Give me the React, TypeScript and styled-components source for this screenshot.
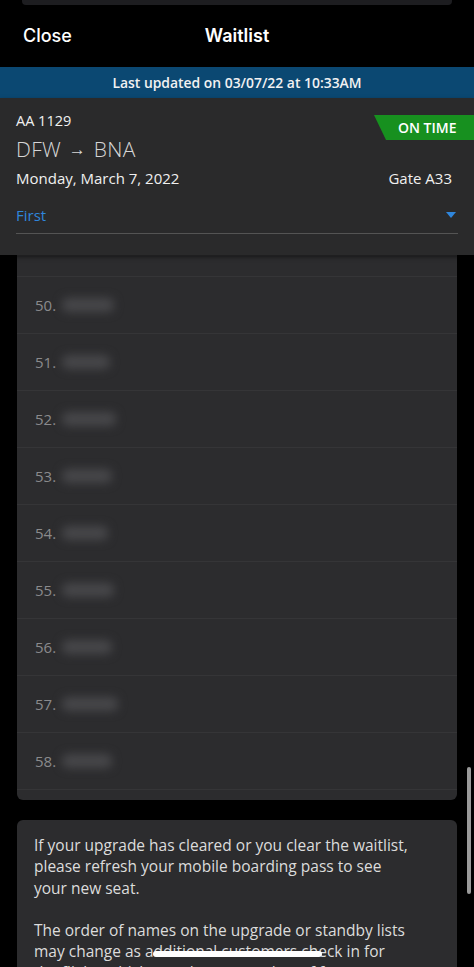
import React from "react";
import styled, { createGlobalStyle } from "styled-components";

const GlobalStyle = createGlobalStyle`
    * {
        box-sizing: border-box;
    }
    body {
        margin: 0;
        background: #000;
        font-family: "Open Sans", "Liberation Sans", sans-serif;
    }
`;

const waitlist = [
    { pos: 50, name: 52 },
    { pos: 51, name: 48 },
    { pos: 52, name: 54 },
    { pos: 53, name: 50 },
    { pos: 54, name: 46 },
    { pos: 55, name: 52 },
    { pos: 56, name: 50 },
    { pos: 57, name: 56 },
    { pos: 58, name: 50 },
];

const App: React.FC = () => {
    return (
        <>
            <GlobalStyle />
            <Screen>
                <TopStrip />
                <NavBar>
                    <NavButton>Close</NavButton>
                    <NavTitle>Waitlist</NavTitle>
                    <span />
                </NavBar>
                <UpdatedBar>Last updated on 03/07/22 at 10:33AM</UpdatedBar>
                <FlightCard>
                    <StatusBadge>ON TIME</StatusBadge>
                    <FlightNumber>AA 1129</FlightNumber>
                    <Route>
                        DFW <Arrow>→</Arrow> BNA
                    </Route>
                    <InfoRow>
                        <span>Monday, March 7, 2022</span>
                        <span>Gate A33</span>
                    </InfoRow>
                    <CabinSelect>
                        <span>First</span>
                        <svg width="10" height="6" viewBox="0 0 10 6">
                            <path d="M0 0 L10 0 L5 6 Z" fill="#2f86dc" />
                        </svg>
                    </CabinSelect>
                </FlightCard>
                <ListCard>
                    <PartialRow />
                    {waitlist.map((item) => (
                        <ListRow key={item.pos}>
                            <Position>{item.pos}.</Position>
                            <BlurredName $width={item.name} />
                        </ListRow>
                    ))}
                </ListCard>
                <NoteCard>
                    <p>
                        If your upgrade has cleared or you clear the waitlist,
                        please refresh your mobile boarding pass to see your
                        new seat.
                    </p>
                    <p>
                        The order of names on the upgrade or standby lists may
                        change as additional customers check in for the flight,
                        which can change number of features.
                    </p>
                </NoteCard>
                <ScrollThumb />
                <HomeIndicator />
            </Screen>
        </>
    );
};

const Screen = styled.div`
    position: relative;
    width: 474px;
    height: 967px;
    overflow: hidden;
    background: #000;
    display: flex;
    flex-flow: column nowrap;
`;

const TopStrip = styled.div`
    flex: none;
    height: 5px;
    margin: 0 22px;
    background: #1d1d20;
    border-radius: 0 0 4px 4px;
`;

const NavBar = styled.div`
    flex: none;
    height: 62px;
    display: grid;
    grid-template-columns: 1fr auto 1fr;
    align-items: center;
    padding: 0 23px 2px;
    font-family: "Inter", "Liberation Sans", sans-serif;
    color: #fff;
`;

const NavButton = styled.span`
    font-size: 18px;
    font-weight: 500;
`;

const NavTitle = styled.span`
    font-size: 18px;
    font-weight: 600;
`;

const UpdatedBar = styled.div`
    flex: none;
    height: 31px;
    display: flex;
    align-items: center;
    justify-content: center;
    background: #0b4872;
    color: #f2f2f2;
    font-size: 13.9px;
    font-weight: 600;
`;

const FlightCard = styled.div`
    position: relative;
    flex: none;
    height: 157px;
    padding: 13px 16px 0;
    background: #2a2a2b;
    color: #f0f0f0;
    box-shadow: 0 2px 4px rgba(0, 0, 0, 0.5);
    z-index: 1;
`;

const StatusBadge = styled.div`
    position: absolute;
    top: 17px;
    right: 0;
    width: 100px;
    height: 25px;
    padding-left: 24px;
    display: flex;
    align-items: center;
    background: #17901f;
    color: #fff;
    font-size: 14px;
    font-weight: 600;
    clip-path: polygon(0 0, 100% 0, 100% 100%, 12px 100%);
`;

const FlightNumber = styled.div`
    font-size: 14.5px;
    line-height: 20px;
`;

const Route = styled.div`
    margin-top: 4px;
    font-size: 21px;
    line-height: 28px;
    font-weight: 300;
    color: #d6d6d6;
    letter-spacing: 0.3px;
`;

const Arrow = styled.span`
    display: inline-block;
    margin: 0 2px;
    font-size: 17px;
    vertical-align: 2px;
`;

const InfoRow = styled.div`
    margin-top: 4px;
    padding-right: 6px;
    display: flex;
    justify-content: space-between;
    font-size: 15px;
    line-height: 22px;
`;

const CabinSelect = styled.div`
    margin-top: 15px;
    height: 30px;
    padding: 0 2px 8px 0;
    display: flex;
    align-items: center;
    justify-content: space-between;
    border-bottom: 1px solid #545454;
    color: #2f86dc;
    font-size: 15px;
`;

const ListCard = styled.div`
    flex: none;
    margin: 0 17px;
    padding-bottom: 10px;
    background: #2c2c2e;
    border-radius: 0 0 6px 6px;
`;

const PartialRow = styled.div`
    height: 22px;
    border-bottom: 1px solid #353537;
    box-shadow: inset 0 7px 0 -6px #333335;
`;

const ListRow = styled.div`
    height: 57px;
    display: flex;
    align-items: center;
    padding-left: 18px;
    border-bottom: 1px solid #353537;
`;

const Position = styled.span`
    width: 27px;
    font-size: 15px;
    color: #8a8a8c;
`;

const BlurredName = styled.span<{ $width: number }>`
    width: ${(p) => p.$width}px;
    height: 14px;
    border-radius: 6px;
    background: #47474a;
    filter: blur(5px);
`;

const NoteCard = styled.div`
    flex: none;
    margin: 20px 17px 0;
    padding: 15px 17px;
    background: #2c2c2e;
    border-radius: 6px;
    color: #dcdcdc;
    font-size: 15.5px;
    line-height: 21.3px;

    p {
        margin: 0 0 21px;
        width: 376px;
    }
`;

const ScrollThumb = styled.div`
    position: absolute;
    top: 767px;
    right: 3px;
    width: 4px;
    height: 127px;
    border-radius: 2px;
    background: #9a9a9a;
`;

const HomeIndicator = styled.div`
    position: absolute;
    left: 153px;
    bottom: 10px;
    width: 169px;
    height: 6px;
    border-radius: 3px;
    background: #fff;
`;

export default App;
